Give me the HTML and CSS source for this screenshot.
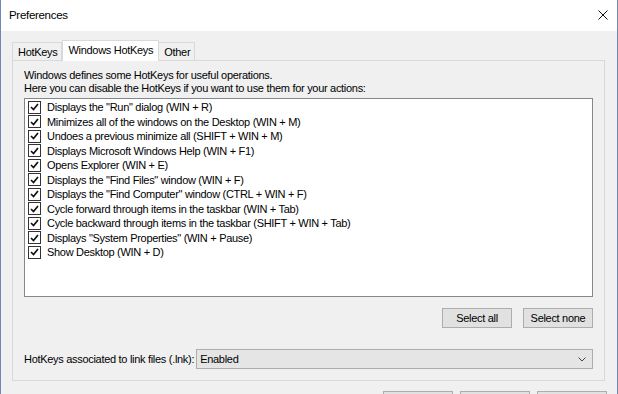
FILE: index.html
```html
<!DOCTYPE html>
<html lang="en">
<head>
  <meta charset="UTF-8">
  <title>Preferences</title>
  <link rel="stylesheet" href="styles.css">
</head>
<body>
  <div class="window">
    <div class="titlebar">
      <span class="title">Preferences</span>
      <svg class="close" width="10" height="10" viewBox="0 0 10 10">
        <path d="M0.5 0.5 L9.5 9.5 M9.5 0.5 L0.5 9.5" stroke="#111" stroke-width="1"/>
      </svg>
    </div>

    <div class="client">
      <div class="tabs">
        <div class="tab">HotKeys</div>
        <div class="tab active">Windows HotKeys</div>
        <div class="tab">Other</div>
      </div>

      <div class="panel">
        <p class="intro">
          Windows defines some HotKeys for useful operations.<br>
          Here you can disable the HotKeys if you want to use them for your actions:
        </p>

        <div class="list" id="list">
          <!-- rows filled by script -->
        </div>

        <div class="list-buttons">
          <button class="btn">Select all</button>
          <button class="btn">Select none</button>
        </div>

        <div class="combo-row">
          <label>HotKeys associated to link files (.lnk):</label>
          <div class="combo">
            <span>Enabled</span>
            <svg width="8" height="5" viewBox="0 0 8 5">
              <path d="M0.5 0.5 L4 4 L7.5 0.5" fill="none" stroke="#444" stroke-width="1"/>
            </svg>
          </div>
        </div>
      </div>

      <div class="dialog-buttons">
        <button class="btn wide"></button>
        <button class="btn wide"></button>
        <button class="btn wide"></button>
      </div>
    </div>
  </div>

  <script>
    const items = [
      'Displays the "Run" dialog (WIN + R)',
      'Minimizes all of the windows on the Desktop (WIN + M)',
      'Undoes a previous minimize all (SHIFT + WIN + M)',
      'Displays Microsoft Windows Help (WIN + F1)',
      'Opens Explorer (WIN + E)',
      'Displays the "Find Files" window (WIN + F)',
      'Displays the "Find Computer" window (CTRL + WIN + F)',
      'Cycle forward through items in the taskbar (WIN + Tab)',
      'Cycle backward through items in the taskbar (SHIFT + WIN + Tab)',
      'Displays "System Properties" (WIN + Pause)',
      'Show Desktop (WIN + D)'
    ];

    const list = document.getElementById('list');
    items.forEach(text => {
      const row = document.createElement('div');
      row.className = 'row';
      row.innerHTML =
        '<span class="check"><svg width="9" height="8" viewBox="0 0 9 8">' +
        '<path d="M1 4 L3.5 6.5 L8 1" fill="none" stroke="#111" stroke-width="1.7"/></svg></span>';
      const label = document.createElement('span');
      label.textContent = text;
      row.appendChild(label);
      list.appendChild(row);
    });
  </script>
</body>
</html>
```

FILE: styles.css
```css
html, body {
  margin: 0;
  padding: 0;
  background: #fff;
}

body {
  font-family: "Liberation Sans", Arial, sans-serif;
  font-size: 11px;
  letter-spacing: -0.3px;
  color: #000;
}

.window {
  width: 618px;
  height: 394px;
  box-sizing: border-box;
  border-left: 1px solid #6f88b8;
  border-right: 1px solid #6f88b8;
  display: flex;
  flex-direction: column;
  overflow: hidden;
}

.titlebar {
  height: 30px;
  flex: none;
  background: #fff;
  display: flex;
  align-items: center;
  justify-content: space-between;
  padding: 0 9px 1px 8px;
}

.title {
  font-size: 11.5px;
}

.client {
  flex: 1;
  background: #f0f0f0;
  padding: 10px 11px 0 11px;
  display: flex;
  flex-direction: column;
}

/* tabs */
.tabs {
  display: flex;
  align-items: flex-end;
  height: 19px;
  position: relative;
  z-index: 1;
}

.tab {
  height: 17px;
  line-height: 18px;
  padding: 0 4px 0 5px;
  border: 1px solid #d9d9d9;
  border-bottom: none;
  background: #f0f0f0;
}

.tab + .tab {
  border-left: none;
}

.tab.active {
  height: 20px;
  line-height: 19px;
  background: #fff;
  border-left: 1px solid #d9d9d9;
  margin-bottom: -1px;
  padding: 0 5px;
}

.panel {
  border: 1px solid #d9d9d9;
  width: 593px;
  height: 321px;
  box-sizing: border-box;
  padding: 8px 11px 0 11px;
  display: flex;
  flex-direction: column;
}

.intro {
  margin: 0;
  line-height: 13px;
}

.list {
  margin-top: 3px;
  height: 199px;
  background: #fff;
  border: 1px solid #828790;
  padding: 1px 0 0 3px;
  box-sizing: border-box;
}

.row {
  display: flex;
  align-items: center;
  height: 14.5px;
  gap: 6px;
}

.check {
  width: 11px;
  height: 11px;
  border: 1px solid #333;
  display: flex;
  align-items: center;
  justify-content: center;
  flex: none;
}

.list-buttons {
  display: flex;
  justify-content: flex-end;
  gap: 11px;
  margin-top: 11px;
}

.btn {
  font-family: inherit;
  font-size: 11px;
  letter-spacing: -0.3px;
  color: #000;
  background: #e1e1e1;
  border: 1px solid #adadad;
  height: 20px;
  width: 70px;
  padding: 0;
}

.combo-row {
  display: flex;
  align-items: center;
  margin-top: 21px;
  gap: 2px;
}

.combo {
  flex: 1;
  height: 20px;
  box-sizing: border-box;
  background: #e5e5e5;
  border: 1px solid #adadad;
  display: flex;
  align-items: center;
  justify-content: space-between;
  padding: 0 6px 0 3px;
}

.dialog-buttons {
  display: flex;
  justify-content: flex-end;
  gap: 7px;
  margin-top: 10px;
  margin-right: -1px;
}

.btn.wide {
  width: 70px;
  height: 22px;
}
```
